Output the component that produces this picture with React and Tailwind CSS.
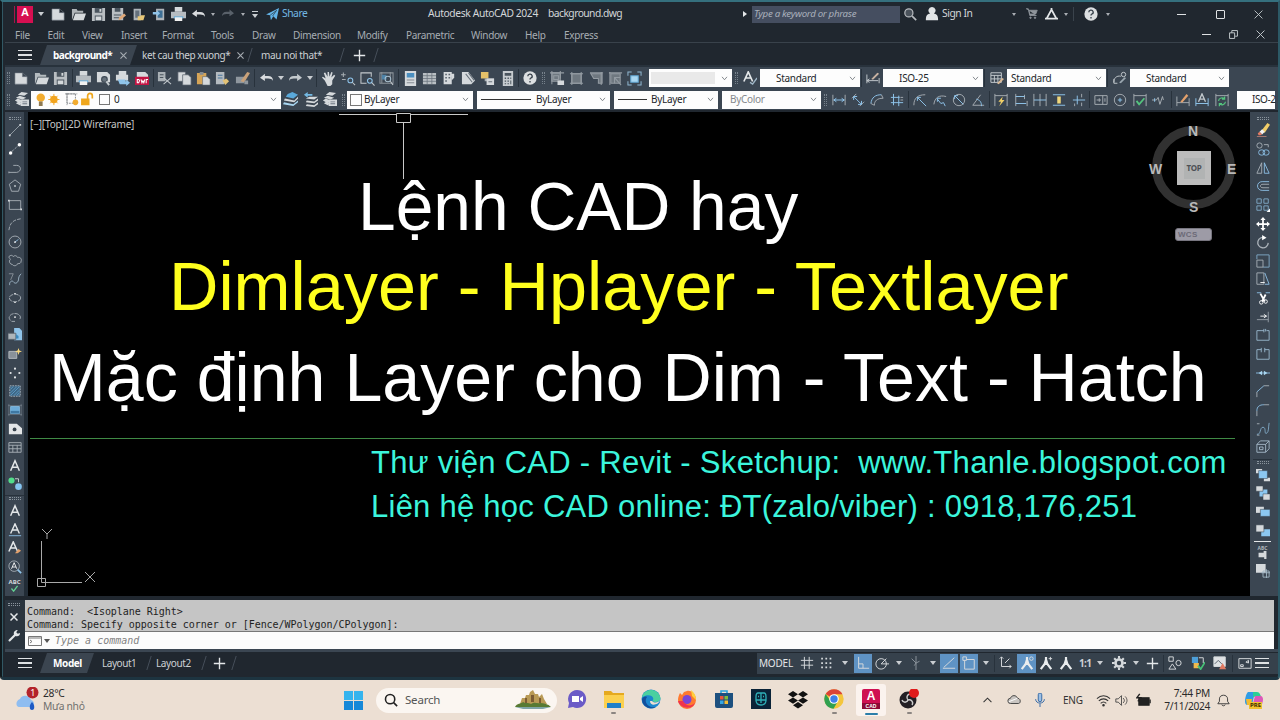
import React from "react";

const W = "#d5d9dc";
const B = "#8fc4ea";

function I({ children, s = "size-[15px]", c = "text-[#c3c9cd]", sw = 1.1 }) {
  return (
    <svg viewBox="0 0 16 16" className={`${s} ${c} shrink-0`} fill="none" stroke="currentColor" strokeWidth={sw}>
      {children}
    </svg>
  );
}

const ic = {
  newf: <path d="M1 2h8l5 4v8H1z M9 2v4h5" fill={W} stroke="#6d7680" strokeWidth=".6" />,
  open: <g stroke="none" fill={W}><path d="M1 14V2h5l1 2h6v2H4z" opacity=".8" /><path d="M4.5 7H16l-2.5 7H2z" /></g>,
  save: <g stroke="none"><path fill="#b9bec2" d="M1 1h14v14H1z" /><path fill="#4a545e" d="M4 1h8v5H4zM4 9h8v6H4z" /><path fill={W} d="M5 10h6v4H5zM9 2h2v3H9z" /></g>,
  saveas: <g stroke="none"><path fill="#b9bec2" d="M1 1h12v13H1z" /><path fill="#4a545e" d="M4 1h6v4H4zM3 8h8v1H3zM3 11h6v1H3z" /><path fill="#e0a878" d="M8 14l1-3 5-4 2 2-5 4z" /></g>,
  webopen: <g stroke="none"><path fill="#aeb5ba" d="M2 1h9v14H2z" /><path fill="#65717c" d="M4 3h5v9H4z" /><path fill="#e8c878" d="M7 10h3l1-1h5l-2 6H7z" /></g>,
  websave: <g stroke="none"><path fill="#aeb5ba" d="M5 1h10v14H5z" /><path fill="#3d6f95" d="M7 3h6v9H7z" /><path fill="#8fc4ea" d="M1 5h5V3l4 3.500-4 3.500V8H1z" /></g>,
  print: <g stroke="none"><path fill={W} d="M4 0h8v5H4z" /><path fill="#b6bcc1" d="M0 5h16v7H0z" /><path fill="#4fa6dd" d="M3 10h10v2H3z" /><path fill="#f1f1f1" d="M4 11h8v4H4z" /></g>,
  preview: <g><path d="M1 1h11l3 3v8H1z" fill={W} stroke="none" /><circle cx="9" cy="9" r="3" fill="#66717b" stroke="#3b4652" /><path d="M11 11l3 4" strokeWidth="2" /></g>,
  publish: <g stroke="none"><path fill={W} d="M4 0h8v4H4zM1 4h13v6H1z" /><path fill="#8fc4ea" d="M3 9h8v2h1v-2l4 3.500-4 3.500v-2H5z" /></g>,
  dwf: <g stroke="none"><path fill={W} d="M3 1h9l3 3v3H3z" /><path fill="#c31544" d="M1 6h15v9H1z" /><path stroke="#fff" d="M3.500 9h1.500l1 1-1 2.500H3.500zM7.500 9l1 3.500 1-2 1 2 1-3.500M13 13V9h2" /></g>,
  cut: <g><path d="M1 1h8v10H1z" fill="#aab1b6" stroke="none" /><path d="M3 4h4M3 7h4" stroke="#4a545e" /><path d="M7 7l8 7M15 7l-8 7" /></g>,
  copy: <g fill={W} stroke="#59636d" strokeWidth=".8"><path d="M1 1h8v10H1z" /><path d="M6 4h6l3 3v8H6z" /></g>,
  paste: <g stroke="none"><path fill="#d6a557" d="M1 2h10v12H1z" /><path fill="#858c92" d="M4 1h4v3H4z" /><path fill={W} stroke="#59636d" strokeWidth=".6" d="M7 6h5l3 3v6H7z" /></g>,
  match: <g stroke="none"><path fill="#b5bbc0" d="M1 1h9v13H1z" /><path fill="#47769c" d="M3 4h5v1H3zM3 7h5v1H3z" /><path fill="#e3c276" d="M8 10l4-2 3 3-4 4z" /></g>,
  blk: <g stroke="none" fill="#8f979e"><path d="M1 6h9v7H1z" /><path fill="#c9a179" d="M6 11l7-10 3 1-6 10z" /><path d="M10 10h4v4h-4z" /></g>,
  undo: <path d="M0 7l6-5v3h4c4 0 6 2 6 6-1-2-3-3-6-3H6v3z" fill="#d9dcdf" stroke="none" />,
  redo: <path d="M16 7l-6-5v3H6c-4 0-6 2-6 6 1-2 3-3 6-3h4v3z" fill="currentColor" stroke="none" />,
  hand: <path d="M4 10L1 7l1-1 3 2-2-6 1.500-.5L7 6V1h1.500l.5 5 2-5 1.400.5L11 7l3-3 1.200 1L12 10v4l-2 2H7z" fill={W} stroke="none" />,
  zrt: <g><path d="M0 4h5M2.500 1.500v5M1 9h4" stroke="#a6adb3" /><circle cx="10" cy="10" r="2.600" stroke={B} /><path d="M12 12l3 3" /></g>,
  zwin: <g><path d="M12 6V2H1v11h6" /><circle cx="10.500" cy="10.500" r="2.500" stroke={B} /><path d="M12.500 12.500l3 3" /></g>,
  zprev: <g><path d="M1 2h14v11H1zM3 1v12M12 1v5" stroke="#8a9299" /><path d="M3 4h5v5H3z" fill="#4e83a8" stroke="none" /><circle cx="9.500" cy="8.500" r="3" stroke="#a8bfce" /><path d="M12 11l3 4" /></g>,
  props: <g stroke="none"><path fill={W} d="M2 0h12v16H2z" /><path fill="#4b8fc0" d="M4 2h8v5H4z" /><path fill="#858c92" d="M4 9h8v1H4zM4 12h8v1H4z" /></g>,
  dc: <g><path d="M1 2h14v12H1z" fill="#b9bfc3" stroke="none" /><path d="M5.500 2v12M10.500 2v12M1 5h14M1 8h14M1 11h14" stroke="#68727b" strokeWidth=".8" /></g>,
  tp: <g stroke="none"><path fill={W} d="M2 0h10v15H2z" /><path fill="#59636d" d="M4 2h2v2H4zM8 2h2v2H8zM4 6h2v2H4zM8 6h2v2H8zM4 10h2v2H4z" /><path fill={W} d="M11 2h4v5l-3 3z" /></g>,
  mk: <g stroke="none"><path fill={W} d="M1 1h7l7 9-4 4H1z" /><path stroke="#68727b" d="M5 3l7 9M8 2l6 8" /></g>,
  ss: <g stroke="none"><path fill="#e5c169" d="M1 1h8v7H1z" /><path fill="#a9b0b5" d="M5 8h10v3H5z" /><path fill={W} d="M7 8h8v7H7z" /><path fill="#68727b" d="M9 11h4v1H9z" /></g>,
  calc: <g stroke="none"><path fill="#c6cbcf" d="M3 0h11v16H3z" /><path fill="#4a545e" d="M5 2h7v3H5zM5 7h1.500v1.500H5zM8 7h1.500v1.500H8zM11 7h1v1.500h-1zM5 10h1.500v1.500H5zM8 10h1.500v1.500H8zM5 13h1.500v1H5zM8 13h1.500v1H8zM11 10h1v4h-1z" /></g>,
  help: <g><circle cx="8" cy="8" r="7.600" fill="#dcdfe1" stroke="none" /><path d="M5.500 6a2.500 2.300 0 1 1 3.500 2c-.8.400-1 .8-1 1.800M8 11.500v1.500" stroke="#343e48" strokeWidth="1.500" /></g>,
  g1: <g stroke="#949ca3"><path d="M2 2h9v9H2z" fill="#6f7880" /><path d="M0 2h15M2 0v14M11 0v8M4 5h5v4H4z" /><path d="M8 10h7v5H8z" fill={W} stroke="none" /></g>,
  g2: <g stroke="#949ca3"><path d="M3 3h10v10H3z" fill="#6f7880" /><path d="M1 3h14M1 13h14M3 1v14M13 1v14" /></g>,
  g3: <g stroke="#949ca3"><path d="M2 3h12v10h-4V8H5z" fill="#6f7880" /><path d="M1 2h14M13 1v14" /></g>,
  g4: <g stroke="#949ca3"><path d="M3 3h10v10H3z" fill="#6f7880" /><path d="M1 2h14M2 1v14M7 7l7 8M7 13V7h6" /></g>,
  g5: <g><path d="M4 5h8v7H4z" fill="#a9d7f2" stroke="#5da3cf" /><path d="M1 5V1h4M11 1h4v4M15 11v4h-4M5 15H1v-4" stroke="#8fb5cf" /></g>,
  layers: <g stroke="none" fill={W}><path d="M4 3l4-3 7 1-4 3zM2 6l4-2 7 2-4 2zM1 9l3-2 5 2-3 3z" /><path d="M2 12l3-2 4 2-3 2z" /><path d="M7 8h9v7H7z" /><path fill="#6b7580" d="M9 10h5v1H9zM9 12h5v1H9z" /></g>,
  layS: <g stroke="none" fill={W}><path d="M5 2l5-2 6 3-5 4-8-2z" fill="#5aa9da" /><path d="M2 7l10 2 4-4v2l-4 4L1 9z" /><path d="M1 11l10 2 5-4v2l-5 4-11-2z" fill="#a9d7f2" /></g>,
  layP: <g stroke="none" fill={W}><path d="M1 3l4-3v2h5v2H5v2z" fill="#73b9e3" /><path d="M7 5h9l-4 3-9-1zM4 9l8 1 4-3v2l-4 3-9-1zM4 13l8 1 4-3v2l-4 3-9-1z" /></g>,
  A: <path d="M3 13.500L8 2l5 11.500M4.800 9.500h6.400" strokeWidth="1.700" stroke="#e4e7e9" />,
  Aed: <g><path d="M1 12L6 1l5 11M3 8h6" strokeWidth="1.900" stroke="#e4e7e9" /><path d="M8 13l3 2 5-7" stroke="#9fb6c7" strokeWidth="1.500" /></g>,
  dimed: <g><path d="M1 4v10M15 8v6M1 11h13M4 9l-3 2 3 2" /><path d="M6 9l7-7 2 1-7 7z" fill="#c9b3a3" stroke="none" /></g>,
  tabed: <g><path d="M1 2h12v11H1zM1 5h12M1 9h12M5 5v8M9 5v8" /><path d="M8 14l6-6 2 1-6 6z" fill="#d8b896" stroke="none" /></g>,
  mled: <g><path d="M1 13c0-5 3-8 8-7M1 9v5h4" /><circle cx="12" cy="4" r="2.500" /><path d="M7 13l6-6 2 1-6 6z" fill="#9ba7b0" stroke="none" /></g>,
  d1: <g><path d="M1 2v12M15 2v12" stroke="#a4abb1" /><path d="M2 8h12M5 6L2 8l3 2M11 6l3 2-3 2" stroke={B} /></g>,
  d2: <g><path d="M1 6l5-5M10 15l5-5" stroke="#a4abb1" /><path d="M3 4l9 9M3 8V4h4M12 9v4H8" stroke={B} /></g>,
  d3: <g><path d="M1 12c1-7 5-10 12-10" stroke={B} /><path d="M5 14c0-5 3-8 10-8M1 12l4 2M13 2l2 4" stroke="#a4abb1" /></g>,
  d4: <g><path d="M4 1v13M1 11h14M1 5h10M10 3v12" stroke={B} /><path d="M12 5h3M12 8h3" stroke="#a4abb1" /></g>,
  d5: <g><path d="M1 14C1 6 5 2 14 2" stroke="#a4abb1" /><path d="M15 15L5 5M5 9V5h4" stroke={B} /></g>,
  d6: <g><path d="M1 13C2 5 7 2 15 4" stroke="#a4abb1" /><path d="M14 15l-2-4-3 1-4-5M5 10V6h4" stroke={B} /></g>,
  d7: <g><circle cx="8" cy="8" r="6.500" stroke="#a4abb1" /><path d="M3 3l10 10M3 7V3h4" stroke={B} /></g>,
  d8: <g><path d="M15 14H2L11 2" stroke="#a4abb1" /><path d="M6 7c4 1 6 3 6 8" stroke={B} /></g>,
  d9: <g><path d="M1 15V1M15 15V1M1 3h14" stroke="#a4abb1" /><path d="M10 4L5 10h3l-2 5 6-7H9z" fill="#f0cf66" stroke="none" /></g>,
  d10: <g><path d="M2 1v14M12 2v5M15 9v6" stroke="#a4abb1" /><path d="M2 4h10M2 12h12" stroke={B} /></g>,
  d11: <g><path d="M1 1v14M8 1v14M15 1v14" stroke="#a4abb1" /><path d="M1 8h14" stroke={B} /></g>,
  d12: <g><path d="M1 2h14M1 14h14" stroke={B} /><path d="M6 4h4v8H6z" fill="#f0d77c" stroke="none" /></g>,
  d13: <g><path d="M1 8h14M6 3v10" stroke={B} /><path d="M11 1v4M11 11v4M3 12v3" stroke="#a4abb1" /></g>,
  d14: <g><path d="M1 3h14v10H1zM10 3v10M6 6v4M3 8h5M12.500 6v4" stroke="#a4abb1" /></g>,
  d15: <g><circle cx="8" cy="8" r="6.500" stroke="#a4abb1" /><path d="M8 5.500v5M5.500 8h5" stroke={B} /></g>,
  d16: <g><path d="M1 15V1M15 15V1M1 3h14" stroke="#a4abb1" /><path d="M4 9l3 4 6-7" stroke="#54c47e" strokeWidth="2" /></g>,
  d17: <g><path d="M0 8h5l2-3 2 8 3-9 1 4" stroke="#a4abb1" /><path d="M3 6v4" stroke={B} /></g>,
  d18: <g><path d="M1 4v11M15 6v9M1 11h14" stroke="#a4abb1" /><path d="M5 10l7-9 2 2-7 8z" fill="#e3a06b" stroke="none" /></g>,
  d19: <g><path d="M1 6v9M15 6v9M1 12h14" stroke={B} /><path d="M4 10l4-9 4 9M5.500 7h5" strokeWidth="1.500" /></g>,
  d20: <g><path d="M1 15V1M15 15V1M1 3h14" stroke="#a4abb1" /><path d="M4 9a4 4 0 0 1 7-2M12 10a4 4 0 0 1-7 2M11 4v3H8M5 15v-3h3" stroke="#54c47e" strokeWidth="1.400" /></g>,
  line: <g><path d="M2 14L14 2" stroke="#9aa3ab" /><path d="M1 13h2v2H1zM13 1h2v2h-2z" fill={W} stroke="none" /></g>,
  xl: <g><path d="M1 14L14 2" strokeDasharray="3 1.500" /><circle cx="3" cy="12.500" r="2" fill="#fff" stroke="none" /><circle cx="13" cy="3" r="2" fill="#fff" stroke="none" /></g>,
  pl: <path d="M1 13h9c6-1 5-8 0-8H6M1 12v2" />,
  pg: <g><path d="M8 1l6.500 5-2.500 8H4L1.500 6z" /><circle cx="8" cy="8" r=".8" fill={W} /></g>,
  rc: <g><path d="M1.500 3h13v10h-13z" /><path d="M0 2h2v2H0zM14 12h2v2h-2z" fill={W} stroke="none" /></g>,
  arc: <path d="M1 15C2 7 6 3 15 2" strokeDasharray="4 1.500" />,
  cir: <g><circle cx="8" cy="8" r="6.800" /><path d="M8 8l4-3" stroke={B} /><circle cx="8" cy="8" r="1" fill="#fff" stroke="none" /></g>,
  rev: <path d="M1 3c2-2 4-2 5 0 2-2 4-1 5 1 3-1 5 2 4 4 0 3-2 3-4 3-1 3-5 3-6 1C2 12 1 8 2 7 4 6 1 5 1 3z" />,
  spl: <g><path d="M2 15c-1-3 2-6 4-4 2 3 5 2 6-2 0-3 1-5 3-7" stroke="#a5bccd" /><path d="M1 2h5l-3 7" stroke="#8b949c" /></g>,
  ell: <g><ellipse cx="8" cy="8" rx="6.500" ry="4.300" strokeDasharray="5 1" /><path d="M7 3h2M7 13h2" stroke="#fff" /></g>,
  ela: <g><path d="M3 12C-1 8 3 4 8 4s8 4 5 7M8 13H4" strokeDasharray="5 1" /><circle cx="8" cy="8" r="1" fill="#fff" stroke="none" /></g>,
  ins: <g stroke="none"><path fill="#8fc4ea" d="M7 0h6l3 3v11H7z" /><path fill="#aeb5ba" stroke="#59636d" d="M0 6h9v7H0z" /><path fill="#3b88bd" d="M9 7l3 2v3H9z" /></g>,
  mkb: <g><path fill="#899199" stroke="#b9bfc4" d="M1 5h9v8H1z" /><path d="M12 1l1 3 3 1-3 1-1 3-1-3-3-1 3-1z" fill="#f4d47c" stroke="none" /></g>,
  pt: <g fill="#e7eaec" stroke="none"><circle cx="8" cy="3" r="1.200" /><circle cx="3" cy="8" r="1.200" /><circle cx="13" cy="8" r="1.200" /><circle cx="8" cy="13" r="1.200" /></g>,
  hat: <g stroke="#5d9cc8"><path d="M2 2h12v12H2z" stroke="#a9b1b8" strokeDasharray="2 1" fill="#3f6785" /><path d="M3 6l3-3M3 10l7-7M3 13l10-10M7 13l6-6M10 13l3-3" /></g>,
  gra: <g><path d="M3 4h10v8H3z" fill="#6cabd8" stroke="#86bfe6" /><path d="M3 9h10v3H3z" fill="#3f78a3" stroke="none" /><path d="M1 1v14M15 1v14M0 3h16M0 13h16" stroke="#7d8790" strokeWidth=".7" /></g>,
  reg: <g stroke="none"><path fill="#e3e5e7" d="M1 2h9l6 5v7H1z" /><circle cx="7.500" cy="8.500" r="2.200" fill="#39434d" /></g>,
  tab: <path d="M1 3h14v11H1zM1 6h14M1 10h14M5.500 6v8M10.500 6v8" />,
  dots2: <g stroke="none"><circle cx="4" cy="4" r="3.500" fill="#53dd8b" /><circle cx="12" cy="11" r="3.800" fill="#85c4f0" /><path d="M8 2h4v4" stroke={W} /></g>,
  Au: <g><path d="M3 12L8 1l5 11M5 8h6" strokeWidth="1.600" stroke="#e4e7e9" /><path d="M1 14.500h14" stroke={B} /></g>,
  Ap: <g><path d="M1 12L6 1l5 11M3 8h6" strokeWidth="1.700" stroke="#e4e7e9" /><path d="M8 14l4-5 3 2-4 3z" fill="#e3a06b" stroke="none" /></g>,
  Af: <g><circle cx="7" cy="7" r="6" /><path d="M11 11l4 4" strokeWidth="2" stroke={B} /><path d="M4 10l3-7 3 7M5 8h4" stroke="#fff" /></g>,
  er: <g stroke="none"><path fill="#f2cd68" d="M6 9l7-9 3 2-6 9z" /><path fill="#f2f2f2" d="M4 10l3-3 3 3-3 3z" /><path fill="#e07a62" d="M2 12l2-2 3 3-2 1H3z" /><path fill="#c9877c" d="M1 15h11v1H1z" /></g>,
  cp: <g><circle cx="4" cy="4" r="3" /><rect x="3" y="9" width="7" height="6" rx="3" stroke={B} /><rect x="8" y="9" width="7" height="6" rx="3" stroke={B} /><path d="M9 3h5v3" /></g>,
  mir: <g><path d="M6.500 2v12H1z" /><path d="M9.500 2v12H15z" stroke={B} /></g>,
  off: <g><path d="M15 3H7C0 3 0 13 7 13h8" stroke={B} /><path d="M15 6H8c-4 0-4 4 0 4h7" /></g>,
  arr: <g><path d="M1 1h5v5H1zM9 1h5v5H9zM1 9h5v5H1zM9 9h5v5H9z" stroke="#84aecb" /><path d="M16 12v4h-4z" fill="#fff" stroke="none" /></g>,
  mov: <path d="M8 0l3 3.500H9V7h3.500V5L16 8l-3.500 3V9H9v3.500h2L8 16l-3-3.500h2V9H3.500v2L0 8l3.500-3v2H7V3.500H5z" fill="#fff" stroke="none" />,
  rot: <g><path d="M10 3a6 6 0 1 0 4 6" strokeWidth="1.500" /><path d="M7 0l5 3-5 3z" fill="#fff" stroke="none" /></g>,
  sca: <g><path d="M1 6V1h14v14H8" stroke="#84aecb" /><path d="M1 7h7v8H1z" /></g>,
  str: <g><path d="M1 1h8v13H1z" /><path d="M10 1l5 13h-5" stroke={B} /><path d="M5 12h5" stroke="#fff" /></g>,
  tri: <g><path d="M1 2h5M11 2h5" stroke={B} /><path d="M5 3l5 9M11 4l-4 8" stroke="#fff" strokeWidth="2" /><circle cx="6" cy="13" r="2" stroke="#fff" /><circle cx="11" cy="12" r="2" stroke="#fff" /></g>,
  ext: <g><path d="M14 2v12M1 11h13" stroke="#9aa3ab" /><path d="M5 7h7M9 5l3 2-3 2" stroke="#fff" /></g>,
  br1: <path d="M9 3H1v11h14V3h-3M9 1v4M11 1v3" stroke="#9bbbd1" />,
  br2: <path d="M6 3H1v11h14V3h-5M6 1v5M10 1v5" stroke="#9bbbd1" />,
  joi: <g><path d="M0 8h16" stroke={B} /><path d="M3 8l4-2.500v5zM13 8L9 5.500v5z" fill="#a9d7f2" stroke="none" /></g>,
  cha: <g><path d="M1 15V9M9 2h6" /><path d="M1 9l8-7" stroke={B} /></g>,
  fil: <g><path d="M1 15V9M9 2h6" /><path d="M1 9c0-5 3-7 8-7" stroke={B} /></g>,
  ble: <g><path d="M1 2h3M1 15h3" /><path d="M1 14c5 1 3-8 7-8s1 8 4 7c3-2 2-7 3-12" stroke="#84aecb" /></g>,
  exp: <g><path d="M1 5h10v9H1zM4 8h4v3H4zM1 5l4-4h10v9l-4 4M11 5l4-4" stroke="#a8bccb" /></g>,
  o1: <g stroke="none"><path fill={W} d="M0 1h7v5H0zM9 11h7v4H9z" /><path fill="#8cc7f0" stroke="#3b4652" strokeWidth=".6" d="M3 3h10v9H3z" /></g>,
  o2: <g stroke="none"><path fill="#8cc7f0" d="M4 4h9v8H4z" /><path fill={W} stroke="#3b4652" strokeWidth=".6" d="M0 0h8v6H0zM8 9h8v7H8z" /></g>,
  o3: <g stroke="none"><path fill={W} d="M0 2h9v7H0z" /><path fill="#8cc7f0" stroke="#3b4652" strokeWidth=".6" d="M5 5h11v8H5z" /></g>,
  o4: <g stroke="none"><path fill="#8cc7f0" d="M6 6h10v8H6z" /><path fill={W} stroke="#3b4652" strokeWidth=".6" d="M0 1h9v8H0z" /></g>,
  o6: <g stroke="none"><path fill={W} d="M0 0h11v10H0z" /><path d="M8 8h7v7H8zM6 10h10M12 6v10" stroke="#a3b8c6" /></g>,
};

const P = ({ n, w = "w-[19.3px]", s, c }) => (
  <div className={`${w} flex shrink-0 items-center justify-center`}><I s={s} c={c}>{ic[n]}</I></div>
);
const Sep = ({ w }) => (
  <div className={`${w} flex h-full shrink-0 justify-center py-0.5`}><div className="w-px bg-[#28323c]" /></div>
);
const Grip = ({ w }) => (
  <div className={`${w} flex shrink-0 items-center justify-center gap-[1px]`}>
    <div className="h-3 border-l border-dotted border-[#77828c]" />
    <div className="h-3 border-l border-dotted border-[#77828c]" />
  </div>
);
const HGrip = () => (
  <div className="flex flex-col items-center gap-[1px]">
    <div className="w-3 border-t border-dotted border-[#8a949d]" />
    <div className="w-3 border-t border-dotted border-[#8a949d]" />
  </div>
);
const Chev = () => (
  <svg viewBox="0 0 8 6" className="mr-1 ml-auto h-[5px] w-[7px] shrink-0" fill="none" stroke="#6d7378"><path d="M1 1l3 3.500L7 1" /></svg>
);
const Combo = ({ w, pl = "pl-4", children, dim }) => (
  <div className={`${w} ${pl} flex h-[18px] shrink-0 items-center whitespace-nowrap bg-[#fdfdfd] text-[10px] tracking-[-0.3px] ${dim ? "text-[#85898d]" : "text-[#22262a]"}`}>
    {children}<Chev />
  </div>
);
const Tri = ({ w, c = "border-t-[#c9cdd1]" }) => (
  <div className={`${w} flex shrink-0 justify-center`}><div className={`border-x-[3px] border-t-[4px] border-x-transparent ${c}`} /></div>
);
const TinyTri = ({ w }) => (
  <div className={`${w} flex shrink-0 justify-center`}><div className="border-x-2 border-t-[3px] border-x-transparent border-t-[#a9aeb3]" /></div>
);
const T = ({ w, children, cls = "" }) => <div className={`${w} ${cls} shrink-0 whitespace-nowrap`}>{children}</div>;
const Slash = ({ w }) => (
  <svg viewBox="0 0 8 16" className={`${w} h-3.5 shrink-0`} stroke="#4b5560" fill="none"><path d="M1.500 16L6.500 0" /></svg>
);
const Lines = () => (
  <div className="flex w-[14px] shrink-0 flex-col gap-[3px]">
    <div className="h-[1.500px] bg-[#dfe2e4]" /><div className="h-[1.500px] bg-[#dfe2e4]" /><div className="h-[1.500px] bg-[#dfe2e4]" />
  </div>
);
const Plus = ({ w }) => (
  <div className={`${w} flex shrink-0 justify-center`}><I s="size-[13px]" c="text-[#e4e7e9]" sw={1.7}><path d="M8 1v14M1 8h14" /></I></div>
);

function TitleBar() {
  return (
    <div className="flex h-[24px] items-center pl-[9px] text-[10.300px] text-[#d3d6d9]">
      <div className="mr-0 flex w-[20px] shrink-0 border-l border-[#a8174b] pl-[2px]">
        <div className="flex h-[17px] w-[16px] items-center justify-center bg-[#d60f51] pb-[3px] font-['Liberation_Sans'] text-[11px] font-bold text-white">A</div>
      </div>
      <Tri w="w-[14px] mr-0" />
      <P n="newf" w="w-[20px]" /><P n="open" w="w-[20px]" /><P n="save" w="w-[20px]" /><P n="saveas" w="w-[20px]" /><P n="webopen" w="w-[20px]" s="size-[13px]" /><P n="websave" w="w-[20px]" s="size-[13px]" /><P n="print" w="w-[20px]" /><P n="undo" w="w-[20px]" s="size-[13px]" />
      <TinyTri w="w-[10px]" />
      <P n="redo" w="w-[20px]" s="size-[12px]" c="text-[#59616a]" />
      <TinyTri w="w-[10px]" />
      <div className="flex w-[14px] shrink-0 flex-col items-center gap-[2px]"><div className="h-px w-[6px] bg-[#c9cdd1]" /><Tri w="" /></div>
      <div className="flex w-[20px] justify-center"><I s="size-[13px]"><path d="M0 8L16 0l-3 14-4-4-3 5-1-6z" fill="#63b4e8" stroke="none" /><path d="M5 9l8-6-5 7" stroke="#242b33" strokeWidth=".8" /></I></div>
      <T w="w-[146px]" cls="tracking-[-0.45px] text-[#72b8e4]">Share</T>
      <T w="w-[120px]" cls="tracking-[-0.38px]">Autodesk AutoCAD 2024</T>
      <T w="w-[195px]" cls="tracking-[-0.55px]">background.dwg</T>
      <div className="w-[9px] shrink-0"><div className="w-0 border-y-[3px] border-l-[4px] border-y-transparent border-l-[#e4e7e9]" /></div>
      <div className="flex h-[17px] w-[148px] shrink-0 items-center bg-[#454e60] pl-[2px] text-[9.700px] tracking-[-0.3px] whitespace-nowrap text-[#a9b0bb] italic">Type a keyword or phrase</div>
      <div className="flex w-[21px] justify-center"><I s="size-[13px]" sw={1.5} c="text-[#b7bbbf]"><circle cx="6" cy="6" r="5" fill="#4a525b" /><path d="M10 10l5 5" strokeWidth="2" /></I></div>
      <div className="flex w-[21px] justify-center"><I s="size-[14px]"><path d="M8 0a4 4 0 0 1 2 7.500c4 .5 5 3 5 7.500H1c0-4.500 1-7 5-7.500A4 4 0 0 1 8 0z" fill="#e0e3e5" stroke="none" /></I></div>
      <T w="w-[67px]" cls="tracking-[-0.45px]">Sign In</T>
      <TinyTri w="w-[10px]" />
      <div className="flex w-[26px] justify-center"><I s="size-[12px]" c="text-[#8f959b]"><path d="M0 1h3l2 9h9M4 3h11l-2 5H5z" fill="#8f959b" /><circle cx="6" cy="13" r="1" fill="#8f959b" /><circle cx="12" cy="13" r="1" fill="#8f959b" /></I></div>
      <div className="flex w-[13px] justify-center"><I s="size-[13px]" sw={2.2} c="text-[#e4e7e9]"><path d="M8 2L2 13h12zM0 13h4M12 13h4M8 0v4" /></I></div>
      <TinyTri w="w-[15px]" />
      <div className="h-3.5 w-px shrink-0 bg-[#3a434c]" />
      <div className="w-[4px] shrink-0" />
      <P n="help" w="w-[25px]" s="size-[14px]" />
      <TinyTri w="w-[10px]" />
      <div className="ml-[57px] flex w-[22px] justify-center"><div className="h-px w-[9px] bg-[#dfe2e4]" /></div>
      <div className="ml-[19px] flex w-[18px] justify-center"><div className="size-[9px] rounded-[1px] border border-[#dfe2e4]" /></div>
      <div className="ml-[20px] flex w-[19px] justify-center"><I s="size-[9px]"><path d="M1 1l14 14M15 1L1 15" strokeWidth="1.600" /></I></div>
    </div>
  );
}

function MenuBar() {
  return (
    <div className="flex h-[17px] items-center border-b border-[#39424b] pt-[3px] pl-[10px] text-[10px] tracking-[-0.3px] text-[#a7adb3]">
      <T w="w-[32.500px]">File</T><T w="w-[34.500px]">Edit</T><T w="w-[39px]">View</T><T w="w-[41px]">Insert</T><T w="w-[49px]">Format</T><T w="w-[41px]">Tools</T><T w="w-[41px]">Draw</T><T w="w-[64px]">Dimension</T><T w="w-[49px]">Modify</T><T w="w-[65px]">Parametric</T><T w="w-[54px]">Window</T><T w="w-[39px]">Help</T><T w="w-[638px]">Express</T>
      <div className="mb-[2px] h-px w-[9px] bg-[#dfe2e4]" />
      <div className="mb-[2px] ml-[18px]"><I s="size-[9px]"><path d="M1 5h9v10H1zM5 5V1h10v10h-4" strokeWidth="1.700" /></I></div>
      <div className="mb-[2px] ml-[18px]"><I s="size-[9px]"><path d="M1 1l14 14M15 1L1 15" strokeWidth="1.700" /></I></div>
    </div>
  );
}

const TabX = () => <I s="size-[7px]" sw={2.5} c="text-[#a7adb3]"><path d="M1 1l14 14M15 1L1 15" /></I>;

function FileTabs() {
  return (
    <div className="flex h-[22px] items-center pt-[2px] pl-[13px] text-[10px] text-[#cdd1d4]">
      <Lines />
      <div className="ml-[8px] flex h-[20px] w-[97px] shrink-0 items-center justify-between bg-[#3b4550] pr-[10px] pl-[13px] font-bold text-white [clip-path:polygon(7px_0,100%_0,calc(100%-7px)_100%,0_100%)]">
        <T w="" cls="tracking-[-0.55px]">background*</T><TabX />
      </div>
      <T w="w-[95px]" cls="ml-[5px] tracking-[-0.4px]">ket cau thep xuong*</T>
      <TabX />
      <Slash w="w-[8px] ml-[2px]" />
      <T w="w-[77px]" cls="ml-[7px] tracking-[-0.35px]">mau noi that*</T>
      <Slash w="w-[8px]" />
      <Plus w="w-[26px]" />
      <Slash w="w-[8px]" />
    </div>
  );
}

function Toolbar1() {
  return (
    <div className="flex h-[22px] items-center bg-[#3b4652]">
      <Grip w="w-[7.200px]" />
      <P n="newf" /><P n="open" /><P n="save" /><Sep w="w-[4px]" />
      <P n="print" /><P n="preview" /><P n="publish" /><P n="dwf" /><Sep w="w-[4px]" />
      <P n="cut" /><P n="copy" /><P n="paste" /><P n="match" /><P n="blk" /><Sep w="w-[4.500px]" />
      <P n="undo" w="w-[20px]" s="size-[13px]" /><Tri w="w-[9px]" /><P n="redo" w="w-[20px]" s="size-[13px]" /><Tri w="w-[9px]" /><Sep w="w-[5px]" />
      <P n="hand" /><P n="zrt" /><P n="zwin" /><P n="zprev" /><Sep w="w-[4px]" />
      <P n="props" w="w-[19.400px]" /><P n="dc" w="w-[19.400px]" /><P n="tp" w="w-[19.400px]" s="size-[13px]" /><P n="mk" w="w-[19.400px]" /><P n="ss" w="w-[19.400px]" /><P n="calc" w="w-[19.400px]" /><Sep w="w-[3.500px]" />
      <P n="help" w="w-[19.500px]" s="size-[14px]" /><Grip w="w-[8px]" />
      <P n="g1" /><P n="g2" /><P n="g3" /><P n="g4" /><P n="g5" /><div className="w-[4.800px] shrink-0" />
      <Combo w="w-[83px]" pl="pl-[2px]" dim><div className="h-3 w-[64px] bg-[#e9e9e9]" /></Combo>
      <Grip w="w-[8px]" /><P n="Aed" w="w-[20px]" s="size-[14px]" />
      <Combo w="w-[100px]">Standard</Combo>
      <Sep w="w-[3px]" /><P n="dimed" w="w-[20px]" s="size-[14px]" />
      <Combo w="w-[100px]">ISO-25</Combo>
      <Sep w="w-[3px]" /><P n="tabed" w="w-[21px]" s="size-[14px]" />
      <Combo w="w-[99px]" pl="pl-[4px]">Standard</Combo>
      <Sep w="w-[3px]" /><P n="mled" w="w-[21px]" s="size-[14px]" />
      <Combo w="w-[99px]">Standard</Combo>
    </div>
  );
}

function Toolbar2() {
  return (
    <div className="flex h-[21px] items-center overflow-hidden bg-[#3b4652]">
      <Grip w="w-[7px]" /><P n="layers" w="w-[19px]" />
      <Combo w="w-[250px]" pl="pl-[4px]">
        <svg viewBox="0 0 68 16" className="h-[15px] w-[64px]" fill="none">
          <circle cx="6" cy="6" r="4.500" fill="#f2ac2f" /><path d="M4 10h4v5H4z" fill="#8e7a52" />
          <circle cx="20" cy="8" r="4" fill="#f2a51f" /><path d="M20 2v12M14 8h12M16 4l8 8M24 4l-8 8" stroke="#f2a51f" />
          <path d="M34 2h9v10h-9zM32 2h13M34 1v13" stroke="#85898d" strokeDasharray="2 1" /><circle cx="43" cy="11" r="3" fill="#f2ac2f" />
          <path d="M49 7h9v7h-9z" fill="#efa71d" /><path d="M56 8V4a2.500 2.500 0 0 1 5 0v3" stroke="#efa71d" strokeWidth="1.800" />
        </svg>
        <div className="mr-[4px] size-[11px] border border-[#777]" />0
      </Combo>
      <P n="layS" w="w-[19.500px]" /><P n="layP" w="w-[19.500px]" /><P n="layers" w="w-[19.500px]" /><Grip w="w-[7.500px]" />
      <Combo w="w-[126px]" pl="pl-[3px]"><div className="mr-[2px] size-[12px] border border-[#777]" />ByLayer</Combo>
      <div className="w-1 shrink-0" />
      <Combo w="w-[133px]" pl="pl-[4px]"><div className="mr-[5px] h-px w-[50px] bg-[#333]" />ByLayer</Combo>
      <div className="w-1 shrink-0" />
      <Combo w="w-[104px]" pl="pl-[4px]"><div className="mr-[4px] h-px w-[29px] bg-[#333]" />ByLayer</Combo>
      <div className="w-1 shrink-0" />
      <Combo w="w-[99px]" pl="pl-[8px]" dim>ByColor</Combo>
      <Grip w="w-[8px]" />
      <P n="d1" s="size-[14px]" /><P n="d2" s="size-[14px]" /><P n="d3" s="size-[14px]" /><P n="d4" s="size-[14px]" /><Sep w="w-[4.500px]" />
      <P n="d5" s="size-[14px]" /><P n="d6" s="size-[14px]" /><P n="d7" s="size-[14px]" /><P n="d8" s="size-[14px]" /><Sep w="w-[3.800px]" />
      <P n="d9" s="size-[14px]" /><P n="d10" s="size-[14px]" /><P n="d11" s="size-[14px]" /><P n="d12" s="size-[14px]" /><P n="d13" s="size-[14px]" /><Sep w="w-[3.300px]" />
      <P n="d14" s="size-[14px]" /><P n="d15" s="size-[14px]" /><P n="d16" s="size-[14px]" /><P n="d17" s="size-[14px]" /><Sep w="w-[4.800px]" />
      <P n="d18" s="size-[14px]" /><P n="d19" s="size-[14px]" /><P n="d20" s="size-[14px]" /><div className="w-[5.600px] shrink-0" />
      <div className="flex h-[18px] w-[38px] shrink-0 items-center bg-[#fdfdfd] pl-[15px] text-[10px] tracking-[-0.4px] whitespace-nowrap text-[#22262a]">ISO-2</div>
    </div>
  );
}

const V = ({ n }) => <div className="flex h-[18.650px] shrink-0 items-center justify-center"><I s="size-[14px]" c="text-[#aab2b9]" sw={1}>{ic[n]}</I></div>;

function LeftTools() {
  return (
    <div className="flex w-[19px] shrink-0 flex-col bg-[#3b4652] pt-[3px]">
      <div className="flex h-[6px] items-center justify-center"><HGrip /></div>
      {["line", "xl", "pl", "pg", "rc", "arc", "cir", "rev", "spl", "ell", "ela", "ins", "mkb", "pt", "hat", "gra", "reg", "tab", "A", "dots2"].map((n) => <V key={n} n={n} />)}
      <div className="mt-[1px] flex h-[7px] items-center justify-center border-t border-[#28323c]"><HGrip /></div>
      {["A", "Au", "Ap", "Af"].map((n) => <V key={n} n={n} />)}
      <div className="flex h-[18px] flex-col items-center pt-[3px]">
        <span className="text-[6px] leading-[6px] font-bold text-[#d5d9dc]">ABC</span>
        <I s="h-[7px] w-[9px]" sw={3} c="text-[#63d192]"><path d="M1 8l5 6L15 2" /></I>
      </div>
    </div>
  );
}

function RightTools() {
  return (
    <div className="ml-[3px] flex w-[19px] shrink-0 flex-col bg-[#3b4652] pt-[3px]">
      <div className="flex h-[6px] items-center justify-center"><HGrip /></div>
      {["er", "cp", "mir", "off", "arr", "mov", "rot", "sca", "str", "tri", "ext", "br1", "br2", "joi", "cha", "fil", "ble", "exp"].map((n) => <V key={n} n={n} />)}
      <div className="mt-[2px] flex h-[7px] items-center justify-center border-t border-[#28323c]"><HGrip /></div>
      {["o1", "o2", "o3", "o4"].map((n) => <V key={n} n={n} />)}
      <div className="mx-px mt-[1px] h-px shrink-0 bg-[#e4e7e9]" />
      <div className="flex h-[20px] flex-col items-center pt-[4px]">
        <span className="text-[5px] leading-[5px] font-bold text-[#aeb5ba]">ABC</span>
        <I s="h-[9px] w-[13px]"><path d="M1 3h9V0h5v14h-4v-3H1z" fill={W} stroke="none" /></I>
      </div>
      <V n="o6" />
    </div>
  );
}

function Canvas() {
  const big = "absolute whitespace-nowrap leading-[78px]";
  const small = "absolute whitespace-pre text-[31px] leading-[36px] text-[#3bf5dc]";
  return (
    <div className="relative h-[484px] w-[1222px] shrink-0 overflow-hidden bg-black font-['Liberation_Sans',sans-serif] text-white">
      <div className="absolute top-[6px] left-[2px] font-['Noto_Sans',sans-serif] text-[10px] leading-[12px] tracking-[-0.15px] whitespace-nowrap text-[#c6c6c6]">[−][Top][2D Wireframe]</div>
      <svg className="absolute top-0 left-[311px] h-[70px] w-[130px]" fill="none" stroke="#c9c9c9">
        <path d="M0 2.500H129M64.500 10V67" /><path d="M57.500 1.500h14v9h-14z" fill="#000" />
      </svg>
      <div className={`${big} top-[56px] left-[330px] text-[67.700px]`}>Lệnh CAD hay</div>
      <div className={`${big} top-[135px] left-[141px] text-[68.400px] text-[#ffff1e]`}>Dimlayer - Hplayer - Textlayer</div>
      <div className={`${big} top-[226px] left-[21px] text-[68.150px]`}>Mặc định Layer cho Dim - Text - Hatch</div>
      <div className="absolute top-[326px] left-[2px] h-px w-[1205px] bg-[#3f8a45]" />
      <div className={`${small} top-[333px] left-[343px] tracking-[0.29px]`}>{"Thư viện CAD - Revit - Sketchup:  www.Thanle.blogspot.com"}</div>
      <div className={`${small} top-[377px] left-[343px] tracking-[0.25px]`}>{"Liên hệ học CAD online: ĐT(zalo/viber) : 0918,176,251"}</div>
      <svg className="absolute top-[415px] left-[8px] h-[62px] w-[64px]" fill="none" stroke="#a9a9a9">
        <path d="M5.500 14v41.500H46M1.500 51.500h8v8h-8zM6 2l5 5 5-5M11 7v5M49 45l10 10M59 45l-10 10" />
      </svg>
      <div className="absolute top-[14px] left-[1124px] size-[83px] rounded-full border-[9px] border-[#313131]" />
      <div className="absolute top-[39px] left-[1149px] flex size-[34px] items-center justify-center bg-[#bcbcbc]">
        <div className="flex size-[21px] items-center justify-center bg-[#b1b3b3] font-['Noto_Sans'] text-[8px] font-bold tracking-[-0.3px] text-[#4d5055]">TOP</div>
      </div>
      <div className="absolute top-[11px] left-[1160px] text-[14px] leading-4 font-bold text-[#b9b9b9]">N</div>
      <div className="absolute top-[87px] left-[1161px] text-[14px] leading-4 font-bold text-[#b9b9b9]">S</div>
      <div className="absolute top-[49px] left-[1121px] text-[14px] leading-4 font-bold text-[#b9b9b9]">W</div>
      <div className="absolute top-[49px] left-[1199px] text-[14px] leading-4 font-bold text-[#b9b9b9]">E</div>
      <div className="absolute top-[116px] left-[1147px] flex h-[13px] w-[37px] items-center rounded-[3px] border border-[#77757f] bg-[#9d9ba6] pl-[2px] text-[8px] font-bold tracking-[0.3px] text-[#6c6a77]">WCS</div>
    </div>
  );
}

function CommandLine() {
  return (
    <div className="mt-[4px] flex h-[49px] font-['DejaVu_Sans_Mono',monospace]">
      <div className="flex w-[20px] flex-col items-center bg-[#2a343e] pt-[3px] pr-[3px]">
        <HGrip />
        <div className="mt-[7px]"><I s="size-[8px]" sw={3} c="text-[#e4e7e9]"><path d="M1 1l14 14M15 1L1 15" /></I></div>
        <div className="mt-[9px]"><I s="size-[12px]" c="text-[#e4e7e9]"><path d="M1 13l7-7c-1-3 1-6 5-6l-2 3 2 2 3-1c0 4-3 5-6 4l-7 7c-2 1-3-1-2-2z" fill="currentColor" stroke="none" /></I></div>
      </div>
      <div className="flex w-[1249px] flex-col">
        <div className="h-[32px] border-b border-[#777] bg-[#c5c5c5] pt-[5px] pl-[2px] text-[10px] leading-[13px] tracking-[-0.03px] whitespace-pre text-[#1f1f1f]">
          <div>{"Command:  <Isoplane Right>"}</div>
          <div>{"Command: Specify opposite corner or [Fence/WPolygon/CPolygon]:"}</div>
        </div>
        <div className="flex h-[17px] items-center bg-[#fcfcfc] pl-[3px] text-[10px] text-[#828282] italic">
          <svg viewBox="0 0 14 10" className="h-[10px] w-[14px]" fill="none" stroke="#777"><path d="M.5 .5h13v9H.5zM.5 2h13M2 4l2 1.500L2 7" /></svg>
          <Tri w="w-[9px]" c="border-t-[#555]" />
          <span className="ml-[4px]">Type a command</span>
        </div>
      </div>
    </div>
  );
}

const St = ({ w, on, children }) => (
  <div className={`${w} flex h-[19px] shrink-0 items-center justify-center ${on ? "bg-[#5f93c4]" : ""}`}><I s="size-[14px]" c="text-[#d5d9dc]">{children}</I></div>
);
const person = <path d="M8 1v5M8 4L6.500 9 2 15M8 4l1.500 5L14 15M6 9h4" strokeWidth="2.500" stroke="#e9ecee" />;

function StatusBar() {
  return (
    <div className="flex h-[22px] items-center bg-[#20272f] pl-[13px] text-[10px] text-[#cdd1d4]">
      <Lines />
      <div className="ml-[8px] flex h-[20px] w-[54px] items-center bg-[#3b4550] pl-[13px] font-bold tracking-[-0.4px] text-white [clip-path:polygon(7px_0,100%_0,calc(100%-7px)_100%,0_100%)]">Model</div>
      <T w="w-[43px]" cls="ml-[8px] tracking-[-0.45px]">Layout1</T><Slash w="w-[8px]" />
      <T w="w-[44px]" cls="ml-[3px] tracking-[-0.4px]">Layout2</T><Slash w="w-[8px]" />
      <Plus w="w-[22px]" /><Slash w="w-[8px]" />
      <div className="ml-auto flex h-[21px] w-[521px] shrink-0 items-center bg-[#36414c]">
        <T w="w-[40px]" cls="pl-[2px] tracking-[-0.2px] text-[#e4e7e9]">MODEL</T>
        <St w="w-[19px]"><path d="M5 1v14M10.500 1v14M1 5h14M1 10.500h14" strokeWidth="1.100" /></St>
        <St w="w-[20px]"><path d="M2.500 3h12M2.500 8h12M2.500 13h12" strokeWidth="2" strokeDasharray="2 2.800" /></St>
        <Tri w="w-[18px]" />
        <St w="w-[18px]" on><path d="M3 1v13h12M3 9h5v5" /></St>
        <St w="w-[20px]"><circle cx="7" cy="9" r="6" /><path d="M7 9h9M7 9l6-6" /></St>
        <Tri w="w-[14px]" />
        <St w="w-[20px]"><path d="M8 0v16M3 3l5 5 4-2M8 8l-2 3" stroke="#8a939b" /></St>
        <Tri w="w-[14px]" />
        <St w="w-[18px]" on><path d="M1 14h14M2 13L14 2" /></St>
        <div className="w-[2px]" />
        <St w="w-[18px]" on><path d="M3 4h11v11H3z" /><path d="M1 1h4v4H1z" fill="#5f93c4" /></St>
        <Tri w="w-[16px]" />
        <Sep w="w-[1px]" />
        <St w="w-[20px]"><path d="M4 1v11h11M2 3l2-2 2 2M13 10l2 2-2 2M8 8l5-5" /></St>
        <div className="w-[2px]" />
        <St w="w-[19px]" on>{person}<circle cx="13" cy="3" r="2" /></St>
        <St w="w-[20px]">{person}<path d="M11 3h4M13 1v4" /></St>
        <St w="w-[20px]">{person}</St>
        <T w="w-[15px]" cls="pl-[3px] font-bold tracking-[-0.6px]">1:1</T>
        <Tri w="w-[18px]" />
        <St w="w-[20px]"><circle cx="8" cy="8" r="4" strokeWidth="3" /><path d="M8 0v3M8 13v3M0 8h3M13 8h3M2.500 2.500l2 2M11.500 11.500l2 2M13.500 2.500l-2 2M2.500 13.500l2-2" strokeWidth="2.400" /></St>
        <Tri w="w-[13px]" />
        <Plus w="w-[20px]" />
        <Sep w="w-[2px]" />
        <St w="w-[22px]"><path d="M1 1h5v5H1zM5 9l4 6H1z" /><circle cx="12" cy="8" r="3" /></St>
        <St w="w-[23px]"><path d="M1 1h7v7H1z" fill="#4d9fd8" stroke="none" /><path d="M3 8h6v6H3z" fill="#efb94d" stroke="none" /><path d="M9 2h5v6" /><path d="M8 11l3 4 5-8" stroke="#46c076" strokeWidth="2" /></St>
        <St w="w-[22px]"><path d="M1 1h13v11H1z" fill="#dfe2e4" /><path d="M2 9l4-4 4 4" stroke="#59636d" /><path d="M7 15l4-7 4 7z" fill="#e07a62" stroke="none" /></St>
        <Sep w="w-[3px]" />
        <St w="w-[21px]"><path d="M1 3h14v11H1zM9 7l3-2v3zM3 10h3v2H3z" /></St>
        <Lines />
      </div>
    </div>
  );
}

const Cell = ({ w, children, bar = "" }) => (
  <div className={`${w} flex h-[40px] shrink-0 flex-col items-center justify-center pt-[3px]`}>
    {children}
    <div className={`mt-[3px] h-[2px] rounded ${bar}`} />
  </div>
);
const App20 = ({ children }) => <svg viewBox="0 0 20 20" className="size-[20px]" fill="none">{children}</svg>;

function Taskbar() {
  return (
    <div className="flex h-[40px] items-center bg-[#ecdfd3] text-[10.300px] text-[#333]">
      <svg viewBox="0 0 26 26" className="ml-[15px] h-[26px] w-[26px] shrink-0" fill="none">
        <path d="M2 19a5 5 0 0 1 3-7c2-5 10-4 11 1 4 1 4 6 0 7H6c-2 0-3 0-4-1z" fill="#8fbdf0" /><path d="M17 15c3 3 3 8 0 8s-3-5 0-8z" fill="#1d59c4" />
        <circle cx="17.500" cy="5.500" r="6" fill="#b3232b" /><text x="15.200" y="9" fontSize="9" fill="#fff" fontFamily="Noto Sans">1</text>
      </svg>
      <div className="ml-[2px] flex w-[301px] shrink-0 flex-col leading-[13px]">
        <span className="tracking-[-0.3px] text-[#2b2b2b]">28°C</span><span className="tracking-[-0.3px] text-[#70706e]">Mưa nhỏ</span>
      </div>
      <div className="grid size-[19px] shrink-0 grid-cols-2 gap-px">
        <div className="bg-[#35b4ee]" /><div className="bg-[#35b4ee]" /><div className="bg-[#1688d8]" /><div className="bg-[#1688d8]" />
      </div>
      <div className="ml-[13px] flex h-[25px] w-[181px] shrink-0 items-center rounded-full bg-[#fbf6f1] pr-[5px] pl-[8px]">
        <I s="size-[14px]" sw={1.8} c="text-[#222]"><circle cx="7" cy="7" r="5.300" /><path d="M11 11l4 4" /></I>
        <span className="ml-[7px] text-[11.500px] tracking-[-0.2px] text-[#555]">Search</span>
        <svg viewBox="0 0 38 20" className="ml-auto h-[20px] w-[38px]" fill="none">
          <path d="M6 14l2-6h3l1-3h3l1-3 3-2 2 4h3l1 3 3-3 2 5 3 5z" fill="#b99a55" /><path d="M11 8h2v5h-2zM17 5h3v7h-3zM25 8h2v5h-2z" fill="#7b5b33" />
          <path d="M1 17c2-4 6-3 8-5 3 2 5 0 8 2 4-3 6 0 9-1 4 0 8 1 11 4z" fill="#587a33" /><path d="M1 17h36l-8 2H9z" fill="#7fa5a8" />
        </svg>
      </div>
      <div className="ml-[1px] flex items-center">
        <Cell w="w-[37px]"><App20><path d="M10 1a9 9 0 1 1-4 17l-5 1 1-5a9 9 0 0 1 8-13z" fill="#6b5bc7" /><path d="M5 7h7v6H5zM13 9l3-2v6l-3-2z" fill="#fff" /></App20></Cell>
        <Cell w="w-[37px]" bar="w-[5px] bg-[#8b8581]"><App20><path d="M0 2h7l2 2h11v5H0z" fill="#e5a91f" /><path d="M0 6h20v13H0z" fill="#fbd04e" /><path d="M3 14h14v5H3z" fill="#1f7fc9" /></App20></Cell>
        <Cell w="w-[37px]"><App20><circle cx="10" cy="10" r="9.500" fill="#1b87cf" /><path d="M1 8C3-1 17-2 19.500 9c0 4-6 5-8 3 3-4-3-8-10-4z" fill="#4ad0a0" /><path d="M6 8c-4 5 2 12 9 10-4 3-14 1-14-8 1-2 3-3 5-2z" fill="#124f9c" /><path d="M11 12c3 3 7 1 8-1-1 5-10 7-10 1z" fill="#ecdfd3" /></App20></Cell>
        <Cell w="w-[36px]"><App20><path d="M10 2c3-1 9 2 9 9a9 9 0 0 1-18 0c0-3 1-5 2-7l2 2 2-3z" fill="#ff7a2f" /><path d="M14 1c4 3 5 7 5 10l-4-4z" fill="#ffcf3c" /><circle cx="10" cy="10.500" r="4.500" fill="#7a45d6" /><path d="M1 12c2 8 15 9 17 2-4 4-9 3-12-2z" fill="#f0334f" /></App20></Cell>
        <Cell w="w-[37px]"><App20><path d="M7 4V2h6v2" stroke="#2ba2dc" strokeWidth="1.600" /><path d="M1 4h18v13a2 2 0 0 1-2 2H3a2 2 0 0 1-2-2z" fill="#1d507f" /><path d="M6 7h3.500v3.500H6z" fill="#e8573a" /><path d="M10.500 7H14v3.500h-3.500z" fill="#83bb3a" /><path d="M6 11.500h3.500V15H6z" fill="#36a7e4" /><path d="M10.500 11.500H14V15h-3.500z" fill="#f3bd35" /></App20></Cell>
        <Cell w="w-[37px]"><App20><path d="M0 0h20v20H0z" fill="#0a2338" /><path d="M10 4v10M10 4H7c-2 0-2 2-2 4v3h5M10 4h3c2 0 2 2 2 4v3h-5M5 11c0 3 2 5 5 5s5-2 5-5M7 7.500h1M12 7.500h1" stroke="#2fb0b8" strokeWidth="1.300" /></App20></Cell>
        <Cell w="w-[37px]"><App20><path d="M5 2l5 3.200-5 3.200L0 5.200zM15 2l5 3.200-5 3.200-5-3.200zM5 8.400l5 3.200-5 3.200-5-3.200zM15 8.400l5 3.200-5 3.200-5-3.200zM10 13l5 3.200-5 3.200-5-3.200z" fill="#111" /></App20></Cell>
        <Cell w="w-[36px]" bar="w-[5px] bg-[#8b8581]"><App20><circle cx="10" cy="10" r="9.700" fill="#f4c63d" /><path d="M10 10L1.600 5.100A9.700 9.700 0 0 1 18.500 5.200H10z" fill="#dc4437" /><path d="M1.600 5.100A9.700 9.700 0 0 0 9.500 19.700L14 12l-7 .5z" fill="#30a050" /><circle cx="10" cy="10" r="4.800" fill="#fff" /><circle cx="10" cy="10" r="3.700" fill="#3f7fe8" /></App20></Cell>
        <div className="flex w-[38px] justify-center">
          <div className="flex h-[32px] w-[30px] flex-col items-center rounded-[3px] bg-[#fbf3ee] pt-[5px]">
            <div className="flex h-[20px] w-[18px] flex-col items-center rounded-[2px] bg-[#cf1052] font-['Liberation_Sans'] font-bold text-white">
              <span className="text-[12px] leading-[14px]">A</span><span className="h-[6px] w-full bg-[#8b0a37] text-center text-[5px] leading-[6px]">CAD</span>
            </div>
            <div className="mt-[4px] h-[2px] w-[13px] rounded bg-[#2b7ea9]" />
          </div>
        </div>
        <Cell w="w-[38px]" bar="w-[5px] bg-[#8b8581]"><App20><circle cx="9" cy="11" r="8.500" fill="#231f24" /><path d="M9 11c-2-2-1-6 2-6M9 11c3-1 6 2 4 5M9 11c-1 3-5 3-6 0" stroke="#cfcfcf" strokeWidth="1.400" /><circle cx="15" cy="4" r="5" fill="#e01b1b" /></App20></Cell>
      </div>
      <div className="ml-[50px] flex items-center">
        <div className="flex w-[18px] justify-center"><I s="size-[9px]" sw={1.8} c="text-[#333]"><path d="M1 11l7-7 7 7" /></I></div>
        <div className="ml-[9px] flex w-[18px] justify-center"><I s="size-[14px]" c="text-[#444]"><path d="M4 12a3 3 0 0 1 0-6c1-4 7-4 8 0 4 0 4 6 1 6z" fill="#c9c5c1" /><path d="M2 10l10-4" stroke="#fff" /></I></div>
        <div className="ml-[8px] flex w-[18px] justify-center"><I s="size-[14px]" c="text-[#3569a5]"><path d="M6 2a2 2 0 0 1 4 0v6a2 2 0 0 1-4 0z" fill="#9dc0e5" /><path d="M3 7c0 6 10 6 10 0M8 12v4" /></I></div>
        <T w="w-[33px]" cls="ml-[14px] text-[10px] tracking-[-0.2px]">ENG</T>
        <I s="size-[15px]" c="text-[#333]" sw={1.1}><path d="M1 6c4-4 10-4 14 0M3 8.500c3-3 7-3 10 0M5 11c2-2 4-2 6 0" /><circle cx="8" cy="13" r=".8" fill="#333" /></I>
        <div className="ml-[4px]"><I s="size-[13px]" c="text-[#444]"><path d="M1 6h3l4-4v12l-4-4H1zM10 5c2 2 2 4 0 6M12.500 3c3 3 3 7 0 10" /></I></div>
        <div className="ml-[8px]"><I s="size-[15px]" c="text-[#222]"><path d="M3 5h11v8H3z" fill="#222" /><path d="M15 7v4M4 1L1 5h4L2 9" strokeWidth="1.500" /></I></div>
        <div className="ml-[3px] flex w-[56px] flex-col text-right text-[10.200px] leading-[13px] tracking-[-0.3px] whitespace-nowrap text-[#2b2b2b]"><span>7:44 PM</span><span>7/11/2024</span></div>
        <div className="ml-[7px]"><I s="size-[13px]" c="text-[#333]"><path d="M1 12h14l-2-3V6c0-6-10-6-10 0v3zM6 13c0 2 4 2 4 0" /></I></div>
        <div className="relative ml-[14px] h-[20px] w-[20px]">
          <App20><path d="M4 2h7l-3 13H3C-1 14 2 3 4 2z" fill="#2f9ce6" /><path d="M9 2h4c3 0 3 3 4 4l-8 1z" fill="#2ccf94" /><path d="M11 6h6c4 1 1 10-1 11H8z" fill="#dc58b8" /><path d="M2 9h6l-1 6H3z" fill="#f5b92e" /></App20>
          <div className="absolute top-[12px] left-[5px] bg-[#f2c230] px-px text-[6px] leading-[7px] font-bold text-[#3b2c00]">PRE</div>
        </div>
      </div>
    </div>
  );
}

export default function App() {
  return (
    <div className="flex h-[720px] w-[1280px] flex-col overflow-hidden bg-[#ecdfd3] font-['Noto_Sans',sans-serif]">
      <div className="flex h-[680px] shrink-0 flex-col overflow-hidden rounded-b-[4px] border-x-2 border-t-2 border-t-[#35707e] border-r-[#2c5966] border-b-[3px] border-l-[#10181c] border-b-[#1d3440] bg-[#20272f]">
        <div className="flex flex-1 flex-col border-l border-[#315864] pl-[2px]">
          <TitleBar />
          <MenuBar />
          <FileTabs />
          <div className="flex h-[45px] shrink-0 flex-col bg-[#28323c] pt-[2px]"><Toolbar1 /><Toolbar2 /></div>
          <div className="mt-[2px] flex h-[484px] shrink-0 bg-[#3b4652]">
            <LeftTools />
            <div className="w-[4px] shrink-0 bg-[#222c36]" />
            <Canvas />
            <RightTools />
          </div>
          <CommandLine />
          <div className="h-[3px] shrink-0 bg-[#3b4652]" />
          <StatusBar />
        </div>
      </div>
      <Taskbar />
    </div>
  );
}
